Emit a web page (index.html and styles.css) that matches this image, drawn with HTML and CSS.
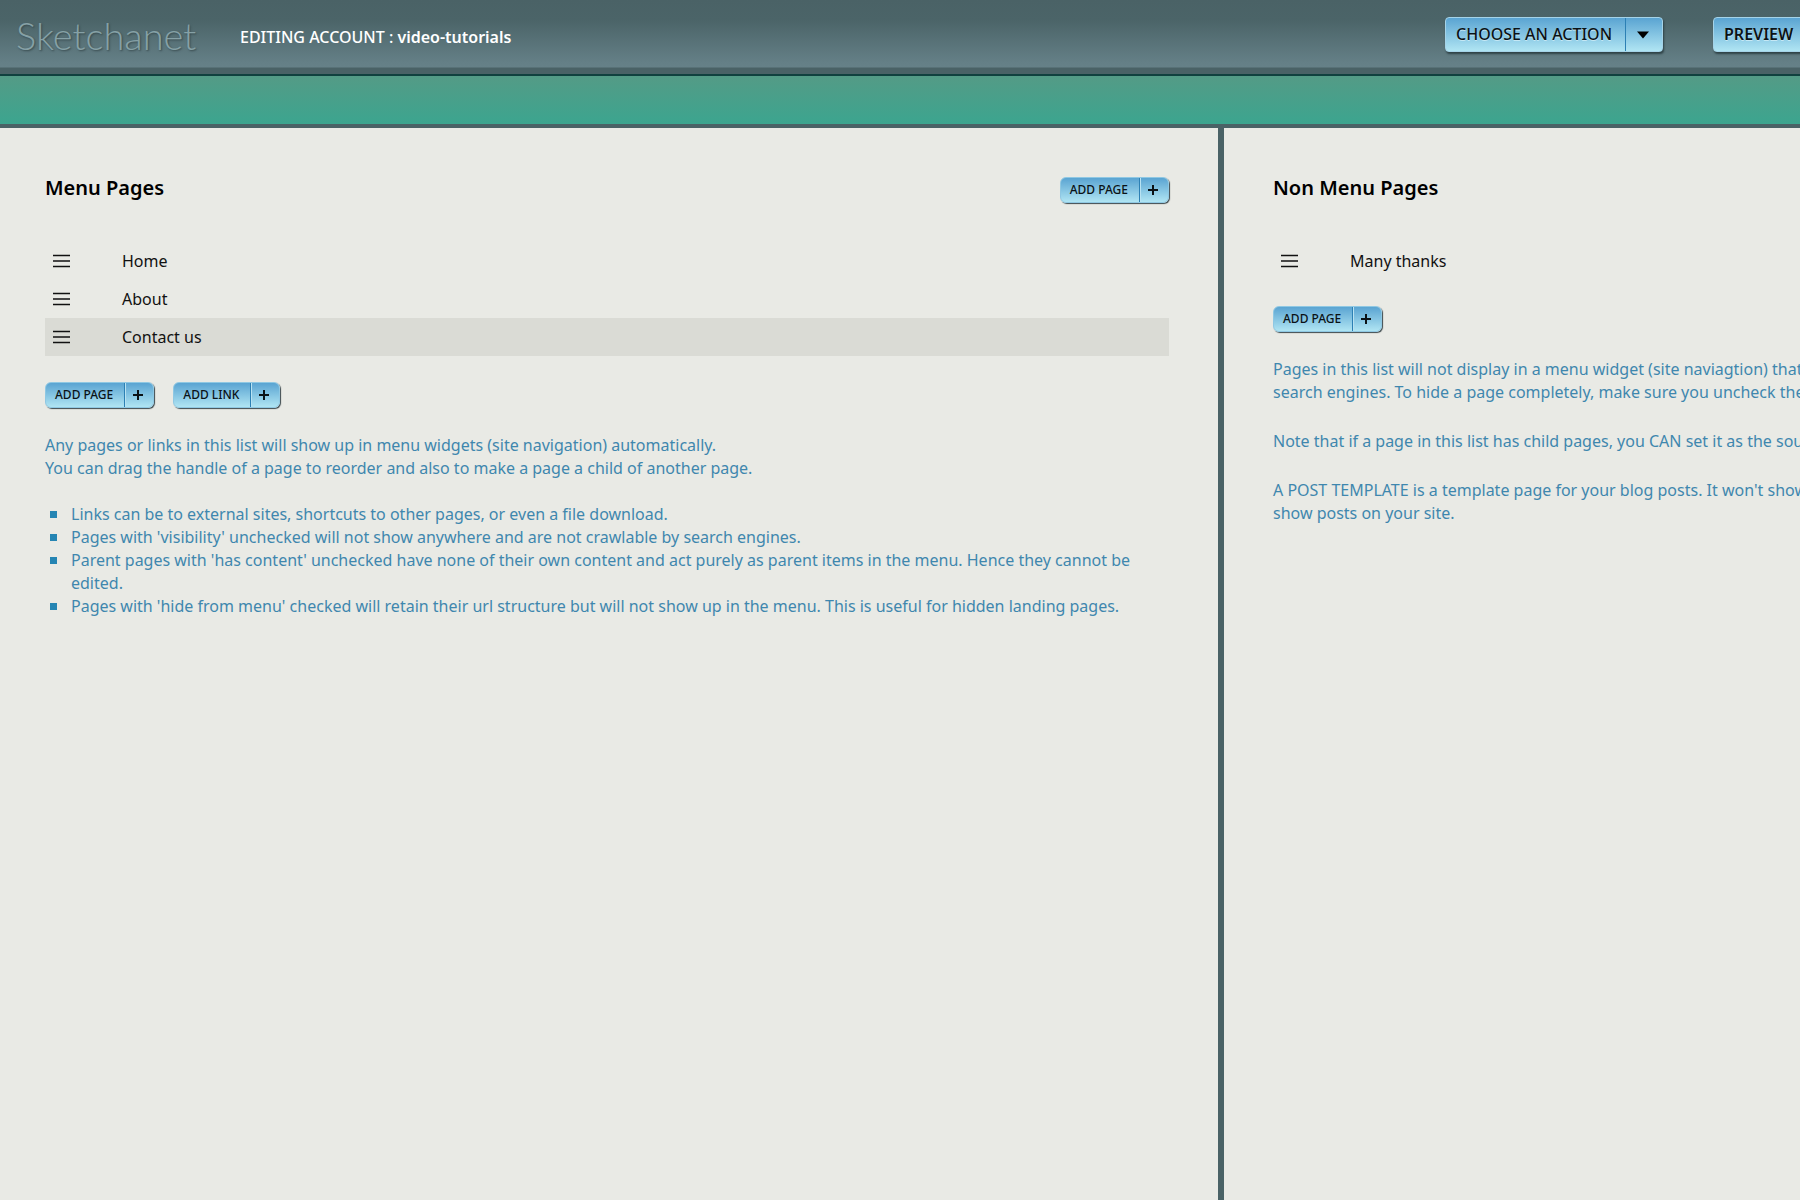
FILE: index.html
```html
<!DOCTYPE html>
<html lang="en">
<head>
    <meta charset="UTF-8">
    <meta name="viewport" content="width=device-width, initial-scale=1.0">
    <title>Sketchanet - Pages</title>
    <link rel="stylesheet" href="styles.css">
</head>
<body>
    <header class="topbar">
        <a class="logo" href="#">Sketchanet</a>
        <div class="account">EDITING ACCOUNT : <strong>video-tutorials</strong></div>
        <div class="actions">
            <div class="action-select">
                <select aria-label="Choose an action">
                    <option>CHOOSE AN ACTION</option>
                </select>
                <svg class="arrow" viewBox="0 0 12 8"><path d="M0 0.500H12L6 7.500Z"/></svg>
            </div>
            <button type="button" class="preview">PREVIEW</button>
        </div>
    </header>
    <div class="subbar"></div>

    <main class="panes">
        <section class="pane pane-menu">
            <div class="pane-head">
                <h2>Menu Pages</h2>
                <button type="button" class="btn"><span class="btn-label">ADD PAGE</span><span class="btn-icon"><svg viewBox="0 0 10 10"><path d="M5 0V10M0 5H10"/></svg></span></button>
            </div>
            <ul class="pages">
                <li><svg class="handle" viewBox="0 0 17 14"><path d="M0 1.500H17M0 7H17M0 12.500H17"/></svg><span>Home</span></li>
                <li><svg class="handle" viewBox="0 0 17 14"><path d="M0 1.500H17M0 7H17M0 12.500H17"/></svg><span>About</span></li>
                <li class="active"><svg class="handle" viewBox="0 0 17 14"><path d="M0 1.500H17M0 7H17M0 12.500H17"/></svg><span>Contact us</span></li>
            </ul>
            <div class="buttons">
                <button type="button" class="btn"><span class="btn-label">ADD PAGE</span><span class="btn-icon"><svg viewBox="0 0 10 10"><path d="M5 0V10M0 5H10"/></svg></span></button>
                <button type="button" class="btn"><span class="btn-label">ADD LINK</span><span class="btn-icon"><svg viewBox="0 0 10 10"><path d="M5 0V10M0 5H10"/></svg></span></button>
            </div>
            <div class="help">
                <p>Any pages or links in this list will show up in menu widgets (site navigation) automatically.<br>
                You can drag the handle of a page to reorder and also to make a page a child of another page.</p>
                <ul>
                    <li>Links can be to external sites, shortcuts to other pages, or even a file download.</li>
                    <li>Pages with 'visibility' unchecked will not show anywhere and are not crawlable by search engines.</li>
                    <li>Parent pages with 'has content' unchecked have none of their own content and act purely as parent items in the menu. Hence they cannot be edited.</li>
                    <li>Pages with 'hide from menu' checked will retain their url structure but will not show up in the menu. This is useful for hidden landing pages.</li>
                </ul>
            </div>
        </section>

        <section class="pane pane-other">
            <div class="pane-head">
                <h2>Non Menu Pages</h2>
            </div>
            <ul class="pages">
                <li><svg class="handle" viewBox="0 0 17 14"><path d="M0 1.500H17M0 7H17M0 12.500H17"/></svg><span>Many thanks</span></li>
            </ul>
            <div class="buttons">
                <button type="button" class="btn"><span class="btn-label">ADD PAGE</span><span class="btn-icon"><svg viewBox="0 0 10 10"><path d="M5 0V10M0 5H10"/></svg></span></button>
            </div>
            <div class="help">
                <p>Pages in this list will not display in a menu widget (site naviagtion) that<br>
                search engines. To hide a page completely, make sure you uncheck the</p>
                <p>Note that if a page in this list has child pages, you CAN set it as the sour</p>
                <p>A POST TEMPLATE is a template page for your blog posts. It won't show<br>
                show posts on your site.</p>
            </div>
        </section>
    </main>
</body>
</html>
```
FILE: styles.css
```css
* { box-sizing: border-box; }
body {
    display: flex;
    flex-direction: column;
    min-height: 100vh;
    margin: 0;
    overflow-x: hidden;
    background: #e9eae5;
    color: #111;
    font-family: "Noto Sans", "Open Sans", sans-serif;
    font-size: 16px;
    line-height: 23px;
}
ul { list-style: none; margin: 0; padding: 0; }
button, select { font: inherit; color: #0b1216; cursor: pointer; }

/* header */
.topbar {
    display: flex;
    align-items: center;
    height: 76px;
    padding: 0 0 8px 16px;
    overflow: hidden;
    background: linear-gradient(#4a6266 0, #4b6468 20px, #647f86 62px, #668188 67px, #4a6266 68px);
    border-bottom: 2px solid #11413f;
}
.logo {
    width: 224px;
    padding-top: 4px;
    color: #86a1a6;
    font-family: Lato, sans-serif;
    font-weight: 300;
    font-size: 38px;
    line-height: 44px;
    text-decoration: none;
    text-shadow: 1px 1px 2px #37494d;
}
.account { flex: 1; padding-top: 8px; color: #fff; white-space: nowrap; font-weight: 500; }
.account strong { font-weight: 600; }
.actions { display: flex; flex: 0 0 355px; gap: 50px; min-width: 0; padding-top: 2px; }
.action-select { position: relative; flex: none; }
.action-select select,
.preview {
    height: 35px;
    border: 1px solid #a5d3e8;
    border-radius: 4px;
    box-shadow: 1px 2px 2px #2f4347;
    font-weight: 500;
    text-shadow: 0 1px 0 #c5e8f5;
}
.action-select select {
    width: 218px;
    padding: 0 0 0 10px;
    appearance: none;
    background:
        linear-gradient(#2c80b4, #2c80b4) 179px 0 / 1px 100% no-repeat,
        linear-gradient(#5aa4d2, #b0e5f3);
}
.arrow { position: absolute; top: 14px; right: 14px; width: 12px; height: 8px; pointer-events: none; }
.preview { flex: none; width: 110px; padding: 0 0 0 10px; background: linear-gradient(#5aa4d2, #b0e5f3); text-align: left; font-weight: 600; }
.subbar {
    height: 52px;
    background: linear-gradient(#549b86, #3ca58f);
    border-bottom: 4px solid #4a6266;
}

/* panes */
.panes { display: flex; flex: 1; }
.pane { padding: 48px 49px 48px 45px; }
.pane-menu { flex: 0 0 68%; border-right: 6px solid #4a6266; }
.pane-other { flex: 1; min-width: 0; padding-left: 49px; padding-right: 0; overflow: hidden; }
.pane-head { display: flex; align-items: center; justify-content: space-between; height: 28px; margin-bottom: 38px; }
h2 { margin: 0; padding-bottom: 4px; color: #000; font-size: 20px; line-height: 28px; font-weight: 600; }

.pages { margin-bottom: 26px; }
.pages li { display: flex; align-items: center; gap: 52px; height: 38px; padding-left: 8px; }
.pages .active { background: #dadbd5; }
.handle { width: 17px; height: 14px; fill: none; stroke: #111; stroke-width: 1.4; }

.buttons { display: flex; gap: 19px; margin-bottom: 26px; }
.btn {
    display: flex;
    height: 26px;
    padding: 0;
    border: 1px solid #8fc8e3;
    border-radius: 6px;
    background: linear-gradient(#5aa4d2, #b0e5f3);
    box-shadow: 1px 1px 1px #3d4a4e;
    font-size: 12px;
    line-height: 23px;
    font-weight: 500;
}
.btn-label { padding: 0 11px 0 9px; border-right: 1px solid #2c80b4; }
.btn-icon { display: flex; align-items: center; justify-content: center; width: 28px; height: 24px; padding-right: 3px; border-left: 1px solid #b8e2f2; }
.btn-icon svg { width: 10px; height: 10px; stroke: #0b1216; stroke-width: 2; }

.help { color: #3f87ae; }
.help p { margin: 0 0 23px; }
.pane-other .help p { margin-bottom: 26px; white-space: nowrap; }
.help li { position: relative; padding-left: 26px; }
.help li::before { content: ""; position: absolute; top: 8px; left: 5px; width: 7px; height: 7px; background: #2585b3; }
```
